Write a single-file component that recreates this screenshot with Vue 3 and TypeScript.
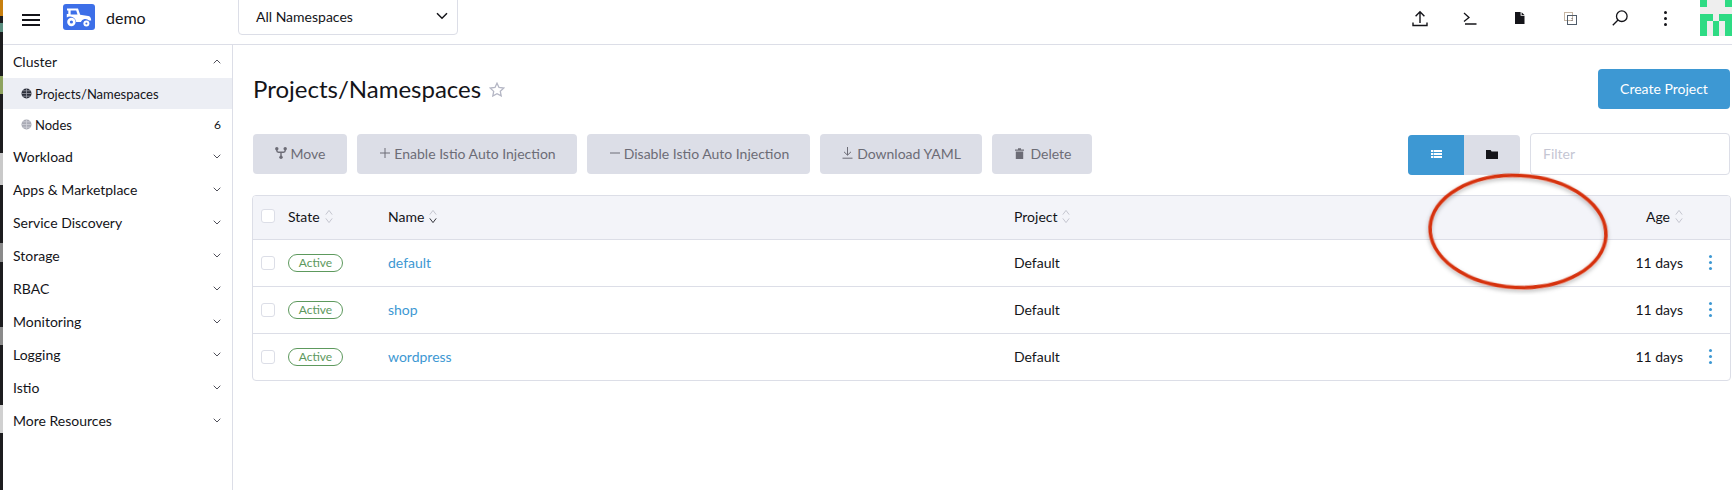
<script setup lang="ts">
const navGroups: string[] = ['Workload', 'Apps & Marketplace', 'Service Discovery', 'Storage', 'RBAC', 'Monitoring', 'Logging', 'Istio', 'More Resources']
const rows: string[] = ['default', 'shop', 'wordpress']
</script>

<template>
  <div class="root">
    <div class="strip">
      <i class="s1"></i><i class="s2"></i><i class="s3"></i><i class="s4"></i><i class="s5"></i><i class="s6"></i><i class="s7"></i>
    </div>
    <div class="app">
      <header class="header">
        <button class="burger" aria-label="Menu"><span></span><span></span><span></span></button>
        <svg class="logo" viewBox="0 0 32 26" width="32" height="26">
          <rect width="32" height="26" rx="3" fill="#3d6fe8" />
          <path d="M4 4.5h11l2.2 6.2 8 1.2c1.6.3 2.6 1.4 2.8 3l.2 1.6h-2.2a5 5 0 0 0-8.2 1.5h-4.6a6.2 6.2 0 0 0-9.4-4.5V10h1.5V6.6H4z" fill="#fff" />
          <path d="M7.6 6.6h5.6l1.3 4H7.6z" fill="#3d6fe8" />
          <circle cx="8.4" cy="18" r="4.2" fill="#fff" /><circle cx="8.4" cy="18" r="1.6" fill="#3d6fe8" />
          <circle cx="23.4" cy="19.6" r="3" fill="#fff" /><circle cx="23.4" cy="19.6" r="1" fill="#3d6fe8" />
        </svg>
        <span class="cluster">demo</span>
        <div class="ns">
          <span>All Namespaces</span>
          <svg width="12" height="8" viewBox="0 0 12 8"><path d="M1 1.2l5 5 5-5" fill="none" stroke="#141419" stroke-width="1.5" /></svg>
        </div>
        <div class="tools">
          <span class="tool"><svg width="16" height="17" viewBox="0 0 16 17" fill="none" stroke="#141419" stroke-width="1.4"><path d="M8 13V2M3.6 6.2L8 1.8l4.4 4.4M1 12.5v3h14v-3" /></svg></span>
          <span class="tool"><svg width="14" height="13" viewBox="0 0 14 13" fill="none" stroke="#141419" stroke-width="1.3"><path d="M1 1l5 4.4L1 9.6M2 12h11.5" /></svg></span>
          <span class="tool"><svg width="10" height="12" viewBox="0 0 10 12"><path d="M0 0h5.6v3.8H9.5V12H0zM6.6.2l2.9 2.7H6.6z" fill="#141419" /></svg></span>
          <span class="tool"><svg width="13" height="13" viewBox="0 0 13 13" fill="none"><rect x=".5" y=".5" width="8" height="8" stroke="#8a6a45" stroke-dasharray="1 1" /><rect x="3.5" y="3.5" width="9" height="9" stroke="#505c6a" /><path d="M8 6v4" stroke="#6a6a76" stroke-dasharray="1 1" /></svg></span>
          <span class="tool"><svg width="16" height="16" viewBox="0 0 16 16" fill="none" stroke="#141419" stroke-width="1.3"><circle cx="9.8" cy="6.2" r="5.3" /><path d="M6 10L.8 15.2" /></svg></span>
          <span class="tool dots"><i></i><i></i><i></i></span>
        </div>
        <svg class="avatar" viewBox="0 0 32 36" width="32" height="36">
          <rect width="32" height="36" fill="#eeeeee" />
          <g fill="#2edb84">
            <rect width="7" height="7" /><rect x="25" width="7" height="7" />
            <rect y="14" width="13" height="7" /><rect x="19" y="14" width="13" height="7" />
            <rect y="21" width="7" height="15" /><rect x="13" y="21" width="6" height="15" /><rect x="25" y="21" width="7" height="15" />
          </g>
        </svg>
      </header>

      <div class="body">
        <nav class="side">
          <div class="group"><span>Cluster</span><svg width="8" height="5" viewBox="0 0 8 5"><path d="M.7 4.3L4 1l3.3 3.3" fill="none" stroke="#50505a" stroke-width="1" /></svg></div>
          <div class="sub active">
            <svg width="11" height="11" viewBox="0 0 11 11"><circle cx="5.5" cy="5.5" r="5" fill="#2b2f3a" /><path d="M.5 5.5h10M5.5.5v10M1.5 2.8h8M1.5 8.2h8" stroke="#a9abb5" stroke-width=".7" /></svg>
            <span>Projects/Namespaces</span>
          </div>
          <div class="sub">
            <svg width="11" height="11" viewBox="0 0 11 11"><circle cx="5.5" cy="5.5" r="5" fill="#a9abb5" /><path d="M.5 5.5h10M5.5.5v10M1.5 2.8h8M1.5 8.2h8" stroke="#d5d6dd" stroke-width=".7" /></svg>
            <span>Nodes</span><b>6</b>
          </div>
          <div v-for="g in navGroups" :key="g" class="group">
            <span>{{ g }}</span>
            <svg width="8" height="5" viewBox="0 0 8 5"><path d="M.7.7L4 4l3.3-3.3" fill="none" stroke="#50505a" stroke-width="1" /></svg>
          </div>
        </nav>

        <main class="main">
          <div class="title-row">
            <h1>Projects/Namespaces</h1>
            <svg class="star" width="16" height="15" viewBox="0 0 16 15"><path d="M8 1.2l2 4.3 4.7.6-3.4 3.2.9 4.6L8 11.7 3.8 14l.9-4.6L1.3 6.1 6 5.5z" fill="none" stroke="#b4b6c4" stroke-width="1.3" /></svg>
            <button class="create">Create Project</button>
          </div>

          <div class="actions">
            <button class="act move">
              <svg width="12" height="12" viewBox="0 0 12 12" fill="#6c6c76"><circle cx="1.8" cy="1.8" r="1.7" /><circle cx="10.2" cy="1.8" r="1.7" /><circle cx="6" cy="10.2" r="1.7" /><path d="M1.8 2v1.5c0 1 .7 1.7 1.7 1.7h5c1 0 1.7-.7 1.7-1.7V2M6 5v5" fill="none" stroke="#6c6c76" stroke-width="1.4" /></svg>
              Move
            </button>
            <button class="act enable">
              <svg width="10" height="10" viewBox="0 0 10 10"><path d="M5 0v10M0 5h10" stroke="#6c6c76" stroke-width="1" /></svg>
              Enable Istio Auto Injection
            </button>
            <button class="act disable">
              <svg width="10" height="10" viewBox="0 0 10 10"><path d="M0 5h10" stroke="#6c6c76" stroke-width="1" /></svg>
              Disable Istio Auto Injection
            </button>
            <button class="act download">
              <svg width="11" height="12" viewBox="0 0 11 12" fill="none" stroke="#6c6c76" stroke-width="1"><path d="M5.5 0v8M2 4.8l3.5 3.4L9 4.8M.5 11.2h10" /></svg>
              Download YAML
            </button>
            <button class="act delete">
              <svg width="9" height="11" viewBox="0 0 9 11" fill="#6c6c76"><path d="M0 1.5h3V.3h3v1.2h3v1.2H0zM.8 3.4h7.4V11H.8z" /></svg>
              Delete
            </button>
            <div class="toggle">
              <span class="on"><svg width="11" height="8" viewBox="0 0 11 8" fill="#fff"><path d="M0 0h2v2H0zM2.6 0H11v2H2.6zM0 3h2v2H0zM2.6 3H11v2H2.6zM0 6h2v2H0zM2.6 6H11v2H2.6z" /></svg></span>
              <span><svg width="12" height="9" viewBox="0 0 12 9" fill="#141419"><path d="M0 0h4.6l1 1.5H12V9H0z" /></svg></span>
            </div>
            <div class="filter">Filter</div>
          </div>

          <div class="table">
            <div class="row head">
              <span class="check"></span>
              <span class="th">State<svg class="sort" width="8" height="15" viewBox="0 0 8 15" fill="none" stroke="#c4c5cf"><path d="M.8 5.6L4 1.4l3.2 4.2M.8 9.4L4 13.6l3.2-4.2" /></svg></span>
              <span class="th">Name<svg class="sort" width="8" height="15" viewBox="0 0 8 15" fill="none"><path d="M.8 5.6L4 1.4l3.2 4.2" stroke="#c4c5cf" /><path d="M.8 9.4L4 13.6l3.2-4.2" stroke="#33343c" /></svg></span>
              <span class="th">Project<svg class="sort" width="8" height="15" viewBox="0 0 8 15" fill="none" stroke="#c4c5cf"><path d="M.8 5.6L4 1.4l3.2 4.2M.8 9.4L4 13.6l3.2-4.2" /></svg></span>
              <span class="th age">Age<svg class="sort" width="8" height="15" viewBox="0 0 8 15" fill="none" stroke="#c4c5cf"><path d="M.8 5.6L4 1.4l3.2 4.2M.8 9.4L4 13.6l3.2-4.2" /></svg></span>
              <span></span>
            </div>
            <div v-for="r in rows" :key="r" class="row">
              <span class="check"></span>
              <span class="pill-cell"><span class="pill">Active</span></span>
              <a class="link">{{ r }}</a>
              <span>Default</span>
              <span class="age">11 days</span>
              <span class="more"><i></i><i></i><i></i></span>
            </div>
          </div>
        </main>
      </div>
    </div>

    <svg class="ring" width="190" height="126" viewBox="0 0 190 126">
      <defs><filter id="sh" x="-10%" y="-10%" width="120%" height="125%"><feDropShadow dx="0" dy="2" stdDeviation="2" flood-color="#000" flood-opacity=".3" /></filter></defs>
      <ellipse cx="95" cy="62.5" rx="88" ry="56" transform="rotate(3 95 63)" fill="none" stroke="#d6300f" stroke-width="3.5" filter="url(#sh)" />
    </svg>
  </div>
</template>

<style>
html, body { margin: 0; background: #fff; }
</style>

<style scoped>
.root {
  position: relative;
  display: flex;
  width: 1732px;
  height: 490px;
  overflow: hidden;
  background: #fff;
  color: #141419;
  font-family: Lato, "Liberation Sans", sans-serif;
  font-size: 14px;
}
.strip {
  flex: 0 0 3px;
  display: flex;
  flex-direction: column;
  background: #1d1d1f;
}
.strip i { display: block; }
.s1 { height: 16px; background: #c8800f; margin-bottom: 7px; }
.s2 { height: 9px; background: #5c8f80; margin-bottom: 44px; }
.s3 { height: 18px; background: #8ea35f; margin-bottom: 59px; }
.s4 { height: 32px; background: #c9c9c9; margin-bottom: 58px; }
.s5 { height: 19px; background: #8a8a8a; margin-bottom: 65px; }
.s6 { height: 18px; background: #8a8a8a; margin-bottom: 60px; }
.s7 { height: 28px; background: #d0d0d0; }
.app { flex: 1; display: flex; flex-direction: column; min-width: 0; }

.header {
  flex: 0 0 44px;
  display: flex;
  align-items: center;
  border-bottom: 1px solid #dcdee7;
}
.burger {
  display: flex;
  flex-direction: column;
  justify-content: space-between;
  width: 18px;
  height: 12px;
  margin: -5px 0 0 19px;
  padding: 0;
  border: 0;
  background: none;
}
.burger span { display: block; height: 2px; background: #141419; }
.logo { margin: -10px 0 0 23px; }
.cluster { margin: -10px 0 0 11px; font-size: 16px; width: 132px; }
.ns {
  align-self: flex-start;
  box-sizing: border-box;
  width: 220px;
  height: 36px;
  margin-top: -1px;
  padding: 0 9px 2px 17px;
  display: flex;
  align-items: center;
  justify-content: space-between;
  border: 1px solid #dcdee7;
  border-radius: 0 0 4px 4px;
}
.tools { margin-left: auto; display: flex; align-items: center; margin-top: -8px; margin-right: 15px; }
.tool { width: 50px; height: 24px; display: flex; align-items: center; justify-content: center; }
.tool.dots { width: 40px; flex-direction: column; gap: 3px; }
.tool.dots i { width: 3px; height: 3px; border-radius: 50%; background: #141419; }
.avatar { align-self: flex-start; }

.body { flex: 1; display: flex; min-height: 0; }
.side {
  flex: 0 0 229px;
  border-right: 1px solid #dcdee7;
}
.group {
  height: 33px;
  padding: 0 11px 0 10px;
  display: flex;
  align-items: center;
  justify-content: space-between;
  font-size: 14px;
}
.sub {
  height: 31px;
  padding: 0 11px 0 18px;
  display: flex;
  align-items: center;
  gap: 3px;
  font-size: 13px;
}
.sub b { margin-left: auto; font-weight: 400; font-size: 12px; }
.sub.active { background: #eceef4; }

.main { flex: 1; min-width: 0; padding: 24px 1px 0 20px; }
.title-row { display: flex; align-items: center; height: 40px; }
h1 { margin: 0; font-size: 24px; font-weight: 400; line-height: 40px; }
.star { margin-left: 8px; }
.create {
  margin-left: auto;
  width: 132px;
  height: 40px;
  margin-right: 1px;
  padding: 0 0 2px;
  border: 0;
  border-radius: 4px;
  background: #3d98d3;
  color: #fff;
  font: 14px Lato, sans-serif;
}
.actions { display: flex; align-items: center; gap: 10px; margin-top: 25px; height: 40px; }
.act {
  height: 40px;
  border: 0;
  border-radius: 4px;
  background: #dcdee7;
  color: #6c6c76;
  font: 14px Lato, sans-serif;
  display: flex;
  align-items: center;
  justify-content: center;
  gap: 4px;
  padding: 0 0 2px;
}
.move { width: 94px; }
.enable { width: 220px; gap: 4px; padding-left: 2px; }
.disable { width: 223px; gap: 4px; padding-left: 2px; }
.download { width: 162px; padding-left: 1px; }
.delete { width: 100px; gap: 7px; padding-left: 2px; }
.toggle {
  margin-left: auto;
  display: flex;
  width: 112px;
  height: 40px;
  margin-top: 2px;
  border-radius: 4px;
  overflow: hidden;
  background: #dcdee7;
}
.toggle span { flex: 1; display: flex; align-items: center; justify-content: center; padding-bottom: 2px; }
.toggle .on { background: #3d98d3; }
.filter {
  box-sizing: border-box;
  width: 200px;
  height: 42px;
  margin-right: 1px;
  padding: 0 0 2px 12px;
  display: flex;
  align-items: center;
  border: 1px solid #dcdee7;
  border-radius: 4px;
  color: #c5c6d3;
}
.table {
  margin: 21px 0 0 -1px;
  border: 1px solid #dcdee7;
  border-radius: 4px;
  overflow: hidden;
}
.row {
  display: grid;
  grid-template-columns: 35px 100px 626px 1fr 120px 47px;
  align-items: center;
  height: 45px;
  padding-bottom: 1px;
  border-top: 1px solid #dcdee7;
}
.row.head { height: 40px; padding-bottom: 3px; border-top: 0; background: #f3f4f9; }
.check {
  box-sizing: border-box;
  width: 14px;
  height: 14px;
  margin-left: 8px;
  border: 1px solid #dcdee7;
  border-radius: 3px;
  background: #fff;
}
.row:not(.head) .check { margin-top: 1px; }
.th { display: inline-flex; align-items: center; gap: 5px; }
.age { justify-content: flex-end; text-align: right; }
.sort { flex: none; }
.pill-cell { display: flex; }
.pill {
  display: inline-flex;
  box-sizing: border-box;
  width: 55px;
  height: 18px;
  align-items: center;
  justify-content: center;
  border: 1px solid #5d995d;
  border-radius: 9px;
  color: #5d995d;
  font-size: 12px;
}
.link { color: #3d98d3; }
.more { display: flex; flex-direction: column; align-items: center; gap: 3px; margin-left: 7px; }
.more i { width: 3px; height: 3px; border-radius: 50%; background: #3d98d3; }
.ring { position: absolute; left: 1423px; top: 169px; }
</style>
